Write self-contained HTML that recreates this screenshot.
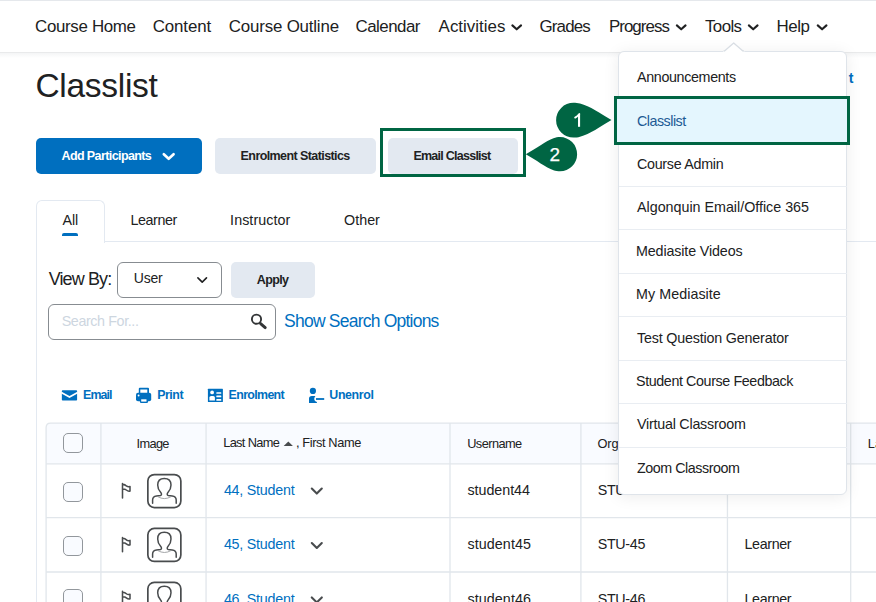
<!DOCTYPE html>
<html><head><meta charset="utf-8">
<style>
*{margin:0;padding:0;box-sizing:border-box}
html,body{width:876px;height:602px;overflow:hidden;background:#fff;font-family:"Liberation Sans",sans-serif;color:#202122}
.a{position:absolute}
.t{position:absolute;white-space:nowrap;line-height:normal}
.vl{position:absolute;width:1px;background:#e3e9f1}
.hl{position:absolute;height:1px;background:#e3e9f1}
.cb{position:absolute;width:20px;height:20px;border:1.5px solid #92979c;border-radius:5px;background:#f9fbff}
.sep{position:absolute;left:619px;width:228px;height:1px;background:#e9edf2}
</style></head><body>
<div class="a" style="left:0;top:0;width:876px;height:1px;background:#e5e8ec"></div>
<div id="n1" class="t" style="left:35.00px;top:16.91px;font-size:16.90px;font-weight:normal;color:#202122;letter-spacing:-0.320px;">Course Home</div>
<div id="n2" class="t" style="left:152.70px;top:16.91px;font-size:16.90px;font-weight:normal;color:#202122;letter-spacing:-0.102px;">Content</div>
<div id="n3" class="t" style="left:228.80px;top:16.91px;font-size:16.90px;font-weight:normal;color:#202122;letter-spacing:-0.186px;">Course Outline</div>
<div id="n4" class="t" style="left:355.50px;top:16.91px;font-size:16.90px;font-weight:normal;color:#202122;letter-spacing:-0.513px;">Calendar</div>
<div id="n5" class="t" style="left:438.60px;top:16.91px;font-size:16.90px;font-weight:normal;color:#202122;letter-spacing:0.021px;">Activities</div>
<div id="n6" class="t" style="left:539.50px;top:16.91px;font-size:16.90px;font-weight:normal;color:#202122;letter-spacing:-0.840px;">Grades</div>
<div id="n7" class="t" style="left:608.90px;top:16.91px;font-size:16.90px;font-weight:normal;color:#202122;letter-spacing:-0.944px;">Progress</div>
<div id="n8" class="t" style="left:705.00px;top:16.91px;font-size:16.90px;font-weight:normal;color:#202122;letter-spacing:-0.600px;">Tools</div>
<div id="n9" class="t" style="left:776.40px;top:16.91px;font-size:16.90px;font-weight:normal;color:#202122;letter-spacing:-0.401px;">Help</div>
<svg class="a" style="left:0;top:0" width="876" height="60">
 <g fill="none" stroke="#202122" stroke-width="2.1" stroke-linecap="round" stroke-linejoin="round">
    <path d="M512.35 25.4 L516.70 29.3 L521.05 25.4"/>
  <path d="M676.85 25.4 L681.20 29.3 L685.55 25.4"/>
  <path d="M748.85 25.4 L753.20 29.3 L757.55 25.4"/>
  <path d="M817.75 25.4 L822.10 29.3 L826.45 25.4"/>
 </g>
</svg>
<div class="a" style="left:0;top:52px;width:876px;height:1px;background:#e9eaeb"></div>
<div class="a" style="left:0;top:53px;width:876px;height:5px;background:linear-gradient(#f4f5f6,#fff)"></div>
<div id="title" class="t" style="left:35.40px;top:66.81px;font-size:33.50px;font-weight:normal;color:#202122;letter-spacing:-0.278px;">Classlist</div>
<div id="tlink" class="t" style="left:848.80px;top:70.00px;font-size:14.00px;font-weight:bold;color:#006fbf;letter-spacing:0.000px;">t</div>
<div class="a" style="left:36px;top:138px;width:166px;height:36px;border-radius:5px;background:#006fbf"></div>
<svg class="a" style="left:155px;top:145px" width="26" height="22"><path d="M8.8 9.2 L13.7 13.8 L18.6 9.2" fill="none" stroke="#fff" stroke-width="2.6" stroke-linecap="round" stroke-linejoin="round"/></svg>
<div class="a" style="left:215px;top:138px;width:161px;height:36px;border-radius:5px;background:#e3e9f1"></div>
<div class="a" style="left:388px;top:138px;width:130px;height:36px;border-radius:5px;background:#e3e9f1"></div>
<div id="b1" class="t" style="left:61.50px;top:148.61px;font-size:12.50px;font-weight:bold;color:#ffffff;letter-spacing:-0.600px;">Add Participants</div>
<div id="b2" class="t" style="left:240.60px;top:148.71px;font-size:12.50px;font-weight:bold;color:#202122;letter-spacing:-0.589px;">Enrolment Statistics</div>
<div id="b3" class="t" style="left:413.40px;top:148.71px;font-size:12.50px;font-weight:bold;color:#202122;letter-spacing:-0.744px;">Email Classlist</div>
<div class="a" style="left:36px;top:200px;width:69px;height:43px;border:1px solid #e3e9f1;border-bottom:none;border-radius:6px 6px 0 0;background:#fff"></div>
<div class="a" style="left:104px;top:241px;width:772px;height:1px;background:#e3e9f1"></div>
<div class="a" style="left:36px;top:242px;width:1px;height:360px;background:#e3e9f1"></div>
<div class="a" style="left:62px;top:233px;width:16px;height:3px;background:#006fbf;border-radius:2px 2px 0 0"></div>
<div id="tab1" class="t" style="left:62.40px;top:212.30px;font-size:14.30px;font-weight:normal;color:#202122;letter-spacing:0.000px;">All</div>
<div id="tab2" class="t" style="left:130.40px;top:212.30px;font-size:14.30px;font-weight:normal;color:#202122;letter-spacing:-0.399px;">Learner</div>
<div id="tab3" class="t" style="left:230.10px;top:212.30px;font-size:14.30px;font-weight:normal;color:#202122;letter-spacing:0.069px;">Instructor</div>
<div id="tab4" class="t" style="left:344.10px;top:212.30px;font-size:14.30px;font-weight:normal;color:#202122;letter-spacing:0.000px;">Other</div>
<div class="a" style="left:117px;top:262px;width:105px;height:36px;border:1px solid #878c91;border-radius:6px"></div>
<svg class="a" style="left:190px;top:270px" width="24" height="20"><path d="M7.9 7.9 L12.2 12.1 L16.5 7.9" fill="none" stroke="#202122" stroke-width="1.6" stroke-linecap="round" stroke-linejoin="round"/></svg>
<div class="a" style="left:231px;top:262px;width:84px;height:36px;border-radius:5px;background:#e3e9f1"></div>
<div class="a" style="left:48px;top:304px;width:228px;height:35.6px;border:1px solid #878c91;border-radius:6px"></div>
<svg class="a" style="left:246px;top:310px" width="26" height="24"><circle cx="10.5" cy="9.2" r="4.6" fill="none" stroke="#333537" stroke-width="1.9"/><path d="M14.6 13.6 L19.2 17.6" stroke="#333537" stroke-width="3" stroke-linecap="round"/></svg>
<div id="vb" class="t" style="left:48.70px;top:268.71px;font-size:18.00px;font-weight:normal;color:#202122;letter-spacing:-0.885px;">View By:</div>
<div id="user" class="t" style="left:133.80px;top:270.31px;font-size:14.00px;font-weight:normal;color:#202122;letter-spacing:-0.200px;">User</div>
<div id="apply" class="t" style="left:256.80px;top:272.90px;font-size:12.50px;font-weight:bold;color:#202122;letter-spacing:-0.650px;">Apply</div>
<div id="search" class="t" style="left:61.70px;top:313.11px;font-size:14.30px;font-weight:normal;color:#cdd6df;letter-spacing:-0.384px;">Search For...</div>
<div id="sso" class="t" style="left:284.10px;top:310.60px;font-size:17.50px;font-weight:normal;color:#006fbf;letter-spacing:-0.778px;">Show Search Options</div>
<svg class="a" style="left:0;top:380px" width="400" height="30">
 <rect x="61.85" y="10.2" width="15.25" height="10.4" rx="0.8" fill="#006fbf"/>
 <path d="M61.3 12.5 L69.5 17.1 L77.7 12.5" fill="none" stroke="#fff" stroke-width="1.7" stroke-linejoin="round"/>
 <path fill-rule="evenodd" fill="#006fbf" d="M139.8 7.8 H148 Q149 7.8 149 8.8 V13.5 H138.8 V8.8 Q138.8 7.8 139.8 7.8 Z M140.3 9.4 V13 H147.3 V9.4 Z"/>
 <rect x="136" y="12.8" width="15.2" height="8.4" rx="2" fill="#006fbf"/>
 <rect x="139.9" y="18" width="8.1" height="5" rx="1.3" fill="#006fbf"/>
 <rect x="141.2" y="19.3" width="5.3" height="2.3" fill="#fff"/>
 <circle cx="138.6" cy="15.5" r="0.95" fill="#fff"/>
 <rect x="207.9" y="8.75" width="15" height="13.35" rx="0.5" fill="#006fbf"/>
 <g fill="#fff">
  <circle cx="212.1" cy="12.4" r="1.85"/>
  <path d="M209.4 20.6 V17.6 Q209.4 15.9 211.1 15.9 H213.2 Q214.9 15.9 214.9 17.6 V20.6 Z"/>
  <rect x="216.3" y="12.2" width="5" height="1.6" rx="0.5"/>
  <rect x="216.3" y="15.6" width="5" height="1.6" rx="0.5"/>
  <rect x="216.3" y="19.1" width="5" height="1.6" rx="0.5"/>
 </g>
 <g fill="#006fbf">
  <circle cx="312.9" cy="10.9" r="3.1"/>
  <path d="M309 23 V18.6 Q309 15.9 311.8 15.9 H315.4 Q314 17.6 314.2 19.2 Q314.4 21.4 316.9 22 V23 Z"/>
  <rect x="316" y="18.1" width="8.2" height="1.8"/>
 </g>
</svg>
<div id="a1" class="t" style="left:83.10px;top:387.80px;font-size:12.40px;font-weight:bold;color:#006fbf;letter-spacing:-0.950px;">Email</div>
<div id="a2" class="t" style="left:157.20px;top:387.80px;font-size:12.40px;font-weight:bold;color:#006fbf;letter-spacing:-0.450px;">Print</div>
<div id="a3" class="t" style="left:228.60px;top:387.80px;font-size:12.40px;font-weight:bold;color:#006fbf;letter-spacing:-0.650px;">Enrolment</div>
<div id="a4" class="t" style="left:329.30px;top:387.80px;font-size:12.40px;font-weight:bold;color:#006fbf;letter-spacing:-0.366px;">Unenrol</div>
<svg class="a" style="left:0;top:0" width="876" height="602">
 <path d="M46.1 602 V427.6 Q46.1 423.1 50.6 423.1 H876 V462.9 H46.1 Z" fill="#f9fbff"/>
 <g fill="none" stroke="#e1e6eb" stroke-width="1.3">
  <path d="M46.1 602 V427.6 Q46.1 423.1 50.6 423.1 H876"/>
  <path d="M46.1 463.8 H876 M46.1 517.6 H876 M46.1 572 H876"/>
  <path d="M100.9 423.1 V602 M206.05 423.1 V602 M450 423.1 V602 M580.9 423.1 V602 M727.45 423.1 V602 M850.7 423.1 V602"/>
 </g>
</svg>
<div class="cb" style="left:63px;top:433px"></div>
<div class="cb" style="left:63px;top:482px"></div>
<div class="cb" style="left:63px;top:535.5px"></div>
<div class="cb" style="left:63px;top:589.3px"></div>
<svg class="a" style="left:0;top:420px" width="876" height="182">
 <path d="M283.7 26 L288.3 21.5 L292.9 26 Z" fill="#494c4e"/>
 <g fill="none" stroke="#494c4e" stroke-width="2.1" stroke-linecap="round" stroke-linejoin="round">
  <path d="M311.8 68.6 L316.8 73.6 L321.8 68.6"/>
  <path d="M311.8 123 L316.8 128 L321.8 123"/>
  <path d="M311.8 177.4 L316.8 182.4 L321.8 177.4"/>
 </g>
 <g id="rowicons" fill="none" stroke="#494c4e" stroke-linecap="round" stroke-linejoin="round">
  <g>
   <path d="M122.5 77.9 V63.5 M122.5 64.4 C124.5 64.2 125.5 65 126.8 66.2 C128 67.2 129 66.8 130 66.5 V71 C128.8 71.6 127.8 71.2 126.3 70 C125 69 124 68.8 122.5 69" stroke-width="1.55"/>
   <rect x="147.85" y="54.55" width="33" height="33" rx="6.5" stroke-width="1.7"/>
   <path d="M152.6 83.3 V80 Q152.6 76.5 156.5 76 L160.5 75.5 Q161.5 75.3 161.5 74.3 Q161.5 73.3 160.6 72.3 Q157.7 69.2 157.7 65 Q157.7 58.4 164.3 58.4 Q171 58.4 171 65 Q171 69.2 168.1 72.3 Q167.2 73.3 167.2 74.3 Q167.2 75.3 168.2 75.5 L172.2 76 Q176.2 76.5 176.2 80 V83.3" stroke-width="1.5"/>
   <path d="M158 76.8 Q164.4 80.6 170.8 76.8" stroke-width="0.9" stroke="#9a9c9e"/>
  </g>
  <g transform="translate(0,53.9)">
   <path d="M122.5 77.9 V63.5 M122.5 64.4 C124.5 64.2 125.5 65 126.8 66.2 C128 67.2 129 66.8 130 66.5 V71 C128.8 71.6 127.8 71.2 126.3 70 C125 69 124 68.8 122.5 69" stroke-width="1.55"/>
   <rect x="147.85" y="54.55" width="33" height="33" rx="6.5" stroke-width="1.7"/>
   <path d="M152.6 83.3 V80 Q152.6 76.5 156.5 76 L160.5 75.5 Q161.5 75.3 161.5 74.3 Q161.5 73.3 160.6 72.3 Q157.7 69.2 157.7 65 Q157.7 58.4 164.3 58.4 Q171 58.4 171 65 Q171 69.2 168.1 72.3 Q167.2 73.3 167.2 74.3 Q167.2 75.3 168.2 75.5 L172.2 76 Q176.2 76.5 176.2 80 V83.3" stroke-width="1.5"/>
   <path d="M158 76.8 Q164.4 80.6 170.8 76.8" stroke-width="0.9" stroke="#9a9c9e"/>
  </g>
  <g transform="translate(0,107.8)">
   <path d="M122.5 77.9 V63.5 M122.5 64.4 C124.5 64.2 125.5 65 126.8 66.2 C128 67.2 129 66.8 130 66.5 V71 C128.8 71.6 127.8 71.2 126.3 70 C125 69 124 68.8 122.5 69" stroke-width="1.55"/>
   <rect x="147.85" y="54.55" width="33" height="33" rx="6.5" stroke-width="1.7"/>
   <path d="M152.6 83.3 V80 Q152.6 76.5 156.5 76 L160.5 75.5 Q161.5 75.3 161.5 74.3 Q161.5 73.3 160.6 72.3 Q157.7 69.2 157.7 65 Q157.7 58.4 164.3 58.4 Q171 58.4 171 65 Q171 69.2 168.1 72.3 Q167.2 73.3 167.2 74.3 Q167.2 75.3 168.2 75.5 L172.2 76 Q176.2 76.5 176.2 80 V83.3" stroke-width="1.5"/>
   <path d="M158 76.8 Q164.4 80.6 170.8 76.8" stroke-width="0.9" stroke="#9a9c9e"/>
  </g>
 </g>
</svg>
<div id="h1" class="t" style="left:136.50px;top:435.71px;font-size:12.80px;font-weight:normal;color:#202122;letter-spacing:-0.650px;">Image</div>
<div id="h2" class="t" style="left:223.20px;top:434.90px;font-size:12.80px;font-weight:normal;color:#202122;letter-spacing:-0.653px;">Last Name</div>
<div id="h3" class="t" style="left:295.90px;top:434.90px;font-size:12.80px;font-weight:normal;color:#202122;letter-spacing:-0.383px;">, First Name</div>
<div id="h4" class="t" style="left:467.20px;top:435.71px;font-size:12.80px;font-weight:normal;color:#202122;letter-spacing:-0.571px;">Username</div>
<div id="h5" class="t" style="left:597.40px;top:435.71px;font-size:12.80px;font-weight:normal;color:#202122;letter-spacing:0.000px;">Org Defined ID</div>
<div id="h6" class="t" style="left:867.80px;top:435.71px;font-size:12.80px;font-weight:normal;color:#202122;letter-spacing:0.000px;">Last Accessed</div>
<div id="r0n" class="t" style="left:223.90px;top:481.71px;font-size:14.30px;font-weight:normal;color:#006fbf;letter-spacing:-0.240px;">44, Student</div>
<div id="r0u" class="t" style="left:467.50px;top:481.71px;font-size:14.30px;font-weight:normal;color:#202122;letter-spacing:-0.050px;">student44</div>
<div id="r0s" class="t" style="left:597.70px;top:481.71px;font-size:14.30px;font-weight:normal;color:#202122;letter-spacing:-0.320px;">STU-44</div>
<div id="r1n" class="t" style="left:223.90px;top:536.21px;font-size:14.30px;font-weight:normal;color:#006fbf;letter-spacing:-0.240px;">45, Student</div>
<div id="r1u" class="t" style="left:467.50px;top:536.21px;font-size:14.30px;font-weight:normal;color:#202122;letter-spacing:0.075px;">student45</div>
<div id="r1s" class="t" style="left:597.70px;top:536.21px;font-size:14.30px;font-weight:normal;color:#202122;letter-spacing:-0.320px;">STU-45</div>
<div id="r1l" class="t" style="left:744.50px;top:536.21px;font-size:14.30px;font-weight:normal;color:#202122;letter-spacing:-0.366px;">Learner</div>
<div id="r2n" class="t" style="left:223.90px;top:590.71px;font-size:14.30px;font-weight:normal;color:#006fbf;letter-spacing:-0.240px;">46, Student</div>
<div id="r2u" class="t" style="left:467.50px;top:590.71px;font-size:14.30px;font-weight:normal;color:#202122;letter-spacing:0.075px;">student46</div>
<div id="r2s" class="t" style="left:597.70px;top:590.71px;font-size:14.30px;font-weight:normal;color:#202122;letter-spacing:-0.320px;">STU-46</div>
<div id="r2l" class="t" style="left:744.50px;top:590.71px;font-size:14.30px;font-weight:normal;color:#202122;letter-spacing:-0.366px;">Learner</div>
<div class="a" style="left:618.4px;top:50.6px;width:229px;height:444.6px;background:#fff;border:1px solid #dfe4ea;border-radius:6px;box-shadow:0 2px 16px rgba(0,0,0,0.08)"></div>
<svg class="a" style="left:715px;top:35px" width="40" height="25"><path d="M8 16.3 L9.8 16.3 L18.7 8.2 L27.6 16.3 L29.4 16.3 L29.4 18 L8 18 Z" fill="#fff"/><path d="M8.5 15.8 L9.8 15.8 L18.7 8 L27.6 15.8 L29 15.8" fill="none" stroke="#d9dee4" stroke-width="1.3" stroke-linejoin="round"/></svg>
<div class="sep" style="top:99px"></div>
<div class="sep" style="top:143px"></div>
<div class="sep" style="top:186px"></div>
<div class="sep" style="top:229px"></div>
<div class="sep" style="top:273px"></div>
<div class="sep" style="top:316px"></div>
<div class="sep" style="top:360px"></div>
<div class="sep" style="top:403px"></div>
<div class="sep" style="top:447px"></div>
<div class="a" style="left:614px;top:96px;width:236px;height:49px;border:3.7px solid #006543;background:#e4f6fe"></div>
<div id="m0" class="t" style="left:637.00px;top:69.11px;font-size:14.30px;font-weight:normal;color:#202122;letter-spacing:-0.349px;">Announcements</div>
<div id="m1" class="t" style="left:637.00px;top:112.52px;font-size:14.30px;font-weight:normal;color:#1d5a94;letter-spacing:-0.500px;">Classlist</div>
<div id="m2" class="t" style="left:637.00px;top:155.94px;font-size:14.30px;font-weight:normal;color:#202122;letter-spacing:-0.292px;">Course Admin</div>
<div id="m3" class="t" style="left:637.00px;top:199.37px;font-size:14.30px;font-weight:normal;color:#202122;letter-spacing:-0.008px;">Algonquin Email/Office 365</div>
<div id="m4" class="t" style="left:636.00px;top:242.79px;font-size:14.30px;font-weight:normal;color:#202122;letter-spacing:-0.134px;">Mediasite Videos</div>
<div id="m5" class="t" style="left:636.00px;top:286.21px;font-size:14.30px;font-weight:normal;color:#202122;letter-spacing:0.054px;">My Mediasite</div>
<div id="m6" class="t" style="left:637.00px;top:329.63px;font-size:14.30px;font-weight:normal;color:#202122;letter-spacing:-0.182px;">Test Question Generator</div>
<div id="m7" class="t" style="left:636.00px;top:373.04px;font-size:14.30px;font-weight:normal;color:#202122;letter-spacing:-0.393px;">Student Course Feedback</div>
<div id="m8" class="t" style="left:637.00px;top:416.47px;font-size:14.30px;font-weight:normal;color:#202122;letter-spacing:-0.235px;">Virtual Classroom</div>
<div id="m9" class="t" style="left:637.00px;top:459.88px;font-size:14.30px;font-weight:normal;color:#202122;letter-spacing:-0.461px;">Zoom Classroom</div>
<div class="a" style="left:380px;top:127.8px;width:146px;height:49.5px;border:3.3px solid #006543"></div>
<svg class="a" style="left:0;top:0" width="876" height="200">
 <path d="M611.5 120.1 C600 113.6 590 106 580 103.6 C578 103 575.5 102.8 573.5 102.8 A17.4 17.4 0 1 0 573.5 137.6 C575.5 137.6 578 137.4 580 136.8 C590 134.4 600 126.6 611.5 120.1 Z" fill="#006543"/>
 <path d="M525.8 154.2 C536 148.4 546 141 553.5 138.2 C555.5 137.5 558 137.1 560 137.1 A17.1 17.1 0 1 1 560 171.3 C558 171.3 555.5 170.9 553.5 170.2 C546 167.4 536 160 525.8 154.2 Z" fill="#006543"/>
</svg>
<div id="c2" class="t" style="left:549.50px;top:144.12px;font-size:19.00px;font-weight:normal;color:#ffffff;letter-spacing:0.000px;-webkit-text-stroke:0.25px #fff;">2</div>
<svg class="a" style="left:0;top:0" width="876" height="200"><path d="M579.05 126.8 V114.2" stroke="#fff" stroke-width="2.1" fill="none"/><path d="M579.3 114 Q577.5 116.3 575.2 117.6" stroke="#fff" stroke-width="1.9" fill="none" stroke-linecap="round"/></svg>
</body></html>
